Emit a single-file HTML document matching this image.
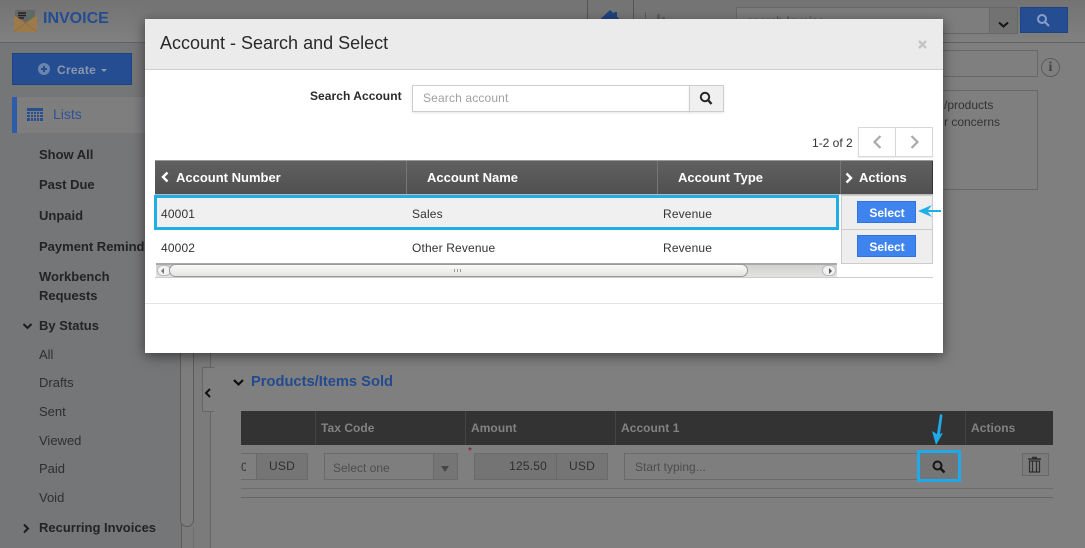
<!DOCTYPE html>
<html><head><meta charset="utf-8">
<style>
html,body{margin:0;padding:0;width:1085px;height:548px;overflow:hidden;background:#7f7f7f;font-family:"Liberation Sans",sans-serif;}
.a{position:absolute;white-space:nowrap;}
.box{position:absolute;box-sizing:border-box;}
.nb{font-size:13px;font-weight:bold;color:#232326;}
.nl{font-size:13px;color:#2f2f31;}
.th{font-size:13px;font-weight:bold;color:#fff;}
.td{font-size:12px;color:#333;letter-spacing:.15px;}
.dh{font-size:12px;font-weight:bold;color:#828282;letter-spacing:.05px;}
.sel{position:absolute;box-sizing:border-box;left:857px;width:59px;height:22px;background:#3f84ee;border:1px solid #2f73dd;color:#fff;font-size:12px;font-weight:bold;text-align:center;line-height:22px;padding-left:1px;}
</style></head><body>
<div id="bg" style="position:absolute;left:0;top:0;width:1085px;height:548px;overflow:hidden;">
<!-- sidebar -->
<div class="box" style="left:0;top:43px;width:181px;height:505px;background:#757678;"></div>
<div class="box" style="left:0;top:0;width:1085px;height:43px;background:linear-gradient(#737373,#808080);border-bottom:1px solid #626262;"></div>
<div class="box" style="left:181px;top:43px;width:30px;height:505px;background:#7b7b7b;border-left:1px solid #5f5b58;"></div>
<div class="box" style="left:210px;top:43px;width:1px;height:505px;background:#666;"></div>
<!-- logo -->
<svg class="a" style="left:13px;top:9px" width="26" height="24" viewBox="0 0 26 24"><rect x="2" y="1" width="20" height="14" fill="#666"/><path d="M5 4h8M5 6.500h8M5 9h6" stroke="#222" stroke-width="1.500"/><text x="15" y="10" font-size="8" fill="#3f7d6b" font-family="Liberation Sans">$</text><path d="M1 7l3 1 8.500 6L21 8l3-1v16H1z" fill="#9c7a4a"/><path d="M1 23l11.500-9L24 23" fill="none" stroke="#8f6f42" stroke-width="1"/></svg>
<div class="a" style="left:43px;top:10px;font-size:16px;font-weight:bold;color:#234c93;">INVOICE</div>
<div class="box" style="left:12px;top:53px;width:120px;height:32px;background:#254e92;border:1px solid #1f4484;"></div>
<div class="box" style="left:38px;top:63px;width:12px;height:12px;border-radius:50%;background:#6b84ad;"></div>
<div class="box" style="left:41px;top:68px;width:6px;height:2px;background:#254e92;"></div>
<div class="box" style="left:43px;top:66px;width:2px;height:6px;background:#254e92;"></div>
<div class="a" style="left:57px;top:63px;font-size:12px;font-weight:bold;color:#8c97ab;letter-spacing:.3px;">Create</div>
<div class="box" style="left:101px;top:69px;border:3px solid transparent;border-top:3px solid #8c97ab;"></div>
<div class="box" style="left:12px;top:97px;width:133px;height:36px;background:#7e7e7f;border-left:5px solid #2f5ca8;"></div>
<svg class="a" style="left:27px;top:108px" width="16" height="13"><rect width="16" height="13" fill="#284f92"/><path d="M0 3.500h16M0 6.500h16M0 9.500h16M3.500 3v10M6.500 3v10M9.500 3v10M12.500 3v10" stroke="#7e7e7f" stroke-width="1"/></svg>
<div class="a" style="left:53px;top:106px;font-size:14px;color:#2f5296;">Lists</div>
<div class="a nb" style="left:39px;top:147px;">Show All</div>
<div class="a nb" style="left:39px;top:177px;">Past Due</div>
<div class="a nb" style="left:39px;top:208px;">Unpaid</div>
<div class="a nb" style="left:39px;top:239px;">Payment Reminders</div>
<div class="a nb" style="left:39px;top:269px;">Workbench</div>
<div class="a nb" style="left:39px;top:288px;">Requests</div>
<div class="a nb" style="left:39px;top:318px;">By Status</div>
<svg class="a" style="left:22px;top:322px" width="11" height="9"><path d="M1.500 2l4 4 4-4" fill="none" stroke="#1d1d1f" stroke-width="2"/></svg>
<div class="a nl" style="left:39px;top:347px;">All</div>
<div class="a nl" style="left:39px;top:375px;">Drafts</div>
<div class="a nl" style="left:39px;top:404px;">Sent</div>
<div class="a nl" style="left:39px;top:433px;">Viewed</div>
<div class="a nl" style="left:39px;top:461px;">Paid</div>
<div class="a nl" style="left:39px;top:490px;">Void</div>
<div class="a nb" style="left:39px;top:520px;">Recurring Invoices</div>
<svg class="a" style="left:22px;top:523px" width="9" height="11"><path d="M2 1.500l4 4-4 4" fill="none" stroke="#1d1d1f" stroke-width="2"/></svg>
<!-- side scroll -->
<div class="box" style="left:180px;top:340px;width:14px;height:187px;background:#7d7d7d;border:1px solid #5f5b58;border-top:0;border-radius:0 0 7px 7px;"></div>
<div class="box" style="left:193px;top:527px;width:1px;height:21px;background:#6e6e6e;"></div>
<div class="box" style="left:202px;top:367px;width:12px;height:45px;background:#7f7f7f;border:1px solid #666;border-right:0;"></div>
<svg class="a" style="left:204px;top:388px" width="8" height="10"><path d="M6 1L2 5l4 4" fill="none" stroke="#111" stroke-width="2"/></svg>
<!-- top right -->
<div class="box" style="left:587px;top:0;width:47px;height:20px;border-left:1px solid #555;border-right:1px solid #555;"></div>
<svg class="a" style="left:599px;top:8px" width="22" height="12"><path d="M1 11.500L11 2l4 3.500V4h3v4.500l3 3z" fill="#1f437f"/></svg>
<div class="box" style="left:645px;top:12px;width:1px;height:8px;background:#606060;"></div>
<div class="box" style="left:657px;top:14px;width:3px;height:6px;background:#606060;"></div>
<div class="box" style="left:662px;top:17px;width:3px;height:3px;background:#606060;"></div>
<div class="box" style="left:736px;top:7px;width:282px;height:27px;background:#7d7d7d;border:1px solid #686868;"></div>
<div class="a" style="left:747px;top:14px;font-size:12px;color:#454545;">search Invoice</div>
<div class="box" style="left:989px;top:7px;width:29px;height:27px;background:#727272;border:1px solid #686868;"></div>
<svg class="a" style="left:997px;top:21px" width="13" height="9"><path d="M2 1.500l4.500 4 4.500-4" fill="none" stroke="#151515" stroke-width="2"/></svg>
<div class="box" style="left:1020px;top:7px;width:48px;height:26px;background:#254e92;border:1px solid #1f4484;"></div>
<svg class="a" style="left:1036px;top:13px" width="15" height="15"><circle cx="6" cy="6" r="4" fill="none" stroke="#85a0c8" stroke-width="2"/><path d="M9 9l4 4" stroke="#85a0c8" stroke-width="2"/></svg>
<div class="box" style="left:900px;top:50px;width:138px;height:27px;border:1px solid #686868;"></div>
<div class="box" style="left:1041px;top:58px;width:19px;height:19px;border:1px solid #5c5c5c;border-radius:50%;color:#444;font:bold 14px/17px 'Liberation Serif',serif;text-align:center;">i</div>
<div class="box" style="left:900px;top:90px;width:138px;height:100px;border:1px solid #686868;"></div>
<div class="a" style="left:944px;top:98px;font-size:12px;color:#333;">/products</div>
<div class="a" style="left:944px;top:115px;font-size:12px;color:#333;">r concerns</div>
<!-- products -->
<svg class="a" style="left:232px;top:378px" width="13" height="10"><path d="M2 2l4.500 4.500L11 2" fill="none" stroke="#0e0e0e" stroke-width="2.200"/></svg>
<div class="a" style="left:251px;top:374px;font-size:14.7px;font-weight:bold;color:#234a8f;">Products/Items Sold</div>
<div class="box" style="left:241px;top:411px;width:812px;height:34px;background:#333;"></div>
<div class="box" style="left:315px;top:411px;width:1px;height:34px;background:#444;"></div>
<div class="box" style="left:465px;top:411px;width:1px;height:34px;background:#444;"></div>
<div class="box" style="left:615px;top:411px;width:1px;height:34px;background:#444;"></div>
<div class="box" style="left:965px;top:411px;width:1px;height:34px;background:#444;"></div>
<div class="a dh" style="left:321px;top:421px;">Tax Code</div>
<div class="a dh" style="left:471px;top:421px;">Amount</div>
<div class="a dh" style="left:621px;top:421px;">Account 1</div>
<div class="a dh" style="left:971px;top:421px;">Actions</div>
<div class="a" style="left:241px;top:460px;font-size:12px;color:#333;width:5px;overflow:hidden;">0</div>
<div class="box" style="left:241px;top:453px;width:16px;height:27px;border:1px solid #6a6a6a;border-left:0;border-right:0;"></div>
<div class="box" style="left:256px;top:453px;width:52px;height:27px;background:#757575;border:1px solid #6a6a6a;color:#2f2f2f;font-size:12px;text-align:center;line-height:25px;letter-spacing:.2px;">USD</div>
<div class="box" style="left:324px;top:453px;width:134px;height:27px;background:#7e7e7e;border:1px solid #6a6a6a;"></div>
<div class="box" style="left:433px;top:453px;width:25px;height:27px;background:#757575;border:1px solid #6a6a6a;"></div>
<div class="box" style="left:441px;top:466px;border:4px solid transparent;border-top:6px solid #474747;border-bottom:0;"></div>
<div class="a" style="left:333px;top:461px;font-size:12px;color:#4d4d4d;">Select one</div>
<div class="a" style="left:468px;top:446px;font-size:10px;color:#8a1414;">*</div>
<div class="box" style="left:474px;top:453px;width:83px;height:27px;background:#747474;border:1px solid #6a6a6a;color:#2f2f2f;font-size:12px;text-align:right;padding-right:9px;line-height:25px;letter-spacing:.2px;">125.50</div>
<div class="box" style="left:556px;top:453px;width:52px;height:27px;background:#757575;border:1px solid #6a6a6a;color:#2f2f2f;font-size:12px;text-align:center;line-height:25px;letter-spacing:.2px;">USD</div>
<div class="box" style="left:624px;top:453px;width:295px;height:27px;border:1px solid #6a6a6a;background:#7e7e7e;"></div>
<div class="a" style="left:635px;top:460px;font-size:12px;color:#4d4d4d;">Start typing...</div>
<div class="box" style="left:917px;top:450px;width:44px;height:32px;border:3px solid #1eaae8;background:#757575;"></div>
<svg class="a" style="left:932px;top:460px" width="14" height="14"><circle cx="5.500" cy="5.500" r="4" fill="none" stroke="#151515" stroke-width="2"/><path d="M8.500 8.500l4 4" stroke="#151515" stroke-width="2.400"/></svg>
<svg class="a" style="left:930px;top:414px" width="16" height="34"><path d="M10 0L12.500 1 10 20l3-1-7 12L2 17l5 3z" fill="#1eaae8"/></svg>
<div class="box" style="left:1022px;top:453px;width:27px;height:23px;border:1px solid #686868;background:#7b7b7b;"></div>
<svg class="a" style="left:1028px;top:456px" width="14" height="17"><path d="M0 3h13M4 1.500h5" stroke="#2f2f2f" stroke-width="1.500"/><path d="M1.500 5h10v11h-10zM4.500 5v11M8.500 5v11" fill="none" stroke="#2f2f2f" stroke-width="1.200"/></svg>
<div class="box" style="left:241px;top:488px;width:812px;height:1px;background:#6c6c6c;"></div>
<div class="box" style="left:241px;top:497px;width:812px;height:1px;background:#666;"></div>
</div>
<!-- modal -->
<div class="box" style="left:145px;top:19px;width:798px;height:334px;background:#fff;box-shadow:0 3px 12px rgba(0,0,0,.5);">
<div class="box" style="left:0;top:0;width:798px;height:51px;background:#ebebeb;border-bottom:1px solid #cfcfcf;"></div>
<div class="a" style="left:15px;top:14px;font-size:18px;color:#2a2a2a;">Account - Search and Select</div>
<svg class="a" style="left:773px;top:21px" width="9" height="9"><path d="M1 1l7 7M8 1L1 8" stroke="#c4c4c4" stroke-width="2.400"/></svg>
<div class="box" style="left:0;top:284px;width:798px;height:1px;background:#e3e3e3;"></div>
</div>
<div class="a" style="left:310px;top:89px;font-size:12px;font-weight:bold;color:#2a2a2a;letter-spacing:.05px;">Search Account</div>
<div class="box" style="left:412px;top:85px;width:278px;height:27px;background:#fff;border:1px solid #cdcdcd;box-shadow:0 1px 2px rgba(0,0,0,.1);"></div>
<div class="a" style="left:423px;top:91px;font-size:12px;color:#a0a0a0;letter-spacing:.15px;">Search account</div>
<div class="box" style="left:689px;top:85px;width:35px;height:27px;background:#f0f0f0;border:1px solid #cdcdcd;box-shadow:0 1px 2px rgba(0,0,0,.1);"></div>
<svg class="a" style="left:699px;top:91px" width="14" height="15"><circle cx="6" cy="6" r="4.200" fill="none" stroke="#23262b" stroke-width="2"/><path d="M9 9l3.500 4" stroke="#23262b" stroke-width="2.400"/></svg>
<div class="a" style="left:812px;top:136px;font-size:12px;color:#333;">1-2 of 2</div>
<div class="box" style="left:858px;top:127px;width:75px;height:30px;background:#fff;border:1px solid #d8d8d8;box-shadow:0 1px 1px rgba(0,0,0,.08);"></div>
<div class="box" style="left:895px;top:127px;width:1px;height:30px;background:#d8d8d8;"></div>
<svg class="a" style="left:871px;top:134px" width="12" height="16"><path d="M9.500 2L3.500 8l6 6" fill="none" stroke="#aaa" stroke-width="2.200"/></svg>
<svg class="a" style="left:909px;top:134px" width="12" height="16"><path d="M2.500 2l6 6-6 6" fill="none" stroke="#aaa" stroke-width="2.200"/></svg>
<!-- table -->
<div class="box" style="left:155px;top:160px;width:778px;height:35px;background:linear-gradient(#606060,#505050);border-top:1px solid #999;border-bottom:1px solid #bbb;"></div>
<div class="box" style="left:406px;top:161px;width:1px;height:33px;background:#777;"></div>
<div class="box" style="left:657px;top:161px;width:1px;height:33px;background:#777;"></div>
<div class="box" style="left:840px;top:161px;width:1px;height:33px;background:#777;"></div>
<div class="box" style="left:932px;top:161px;width:1px;height:33px;background:#333;"></div>
<svg class="a" style="left:160px;top:171px" width="10" height="12"><path d="M7.500 1.500L3 6l4.500 4.500" fill="none" stroke="#fff" stroke-width="2.400"/></svg>
<div class="a th" style="left:176px;top:170px;">Account Number</div>
<div class="a th" style="left:427px;top:170px;">Account Name</div>
<div class="a th" style="left:678px;top:170px;">Account Type</div>
<svg class="a" style="left:844px;top:172px" width="10" height="12"><path d="M2.500 1.500L7 6l-4.500 4.500" fill="none" stroke="#fff" stroke-width="2.400"/></svg>
<div class="a th" style="left:859px;top:170px;">Actions</div>
<div class="box" style="left:154px;top:195px;width:685px;height:35px;background:#f0f0f0;border:3px solid #1eaee8;"></div>
<div class="a td" style="left:161px;top:207px;">40001</div>
<div class="a td" style="left:412px;top:207px;">Sales</div>
<div class="a td" style="left:663px;top:207px;">Revenue</div>
<div class="a td" style="left:161px;top:241px;">40002</div>
<div class="a td" style="left:412px;top:241px;">Other Revenue</div>
<div class="a td" style="left:663px;top:241px;">Revenue</div>
<div class="box" style="left:841px;top:195px;width:92px;height:35px;background:#eee;border:1px solid #ccc;"></div>
<div class="box" style="left:841px;top:230px;width:92px;height:34px;background:#eee;border:1px solid #ccc;border-top:0;"></div>
<div class="sel" style="top:201px;">Select</div>
<div class="sel" style="top:235px;">Select</div>
<svg class="a" style="left:917px;top:204px" width="26" height="14"><path d="M1 7L15 1l-4 5h13v2H11l4 5z" fill="#1eaee8"/></svg>
<!-- hscroll -->
<div class="box" style="left:156px;top:263px;width:681px;height:14px;background:linear-gradient(#d2d2d0,#e2e2e0);border-top:2px solid #aaa;"></div>
<div class="box" style="left:157px;top:265px;width:14px;height:11px;background:#f2f2f2;border:1px solid #bbb;border-radius:6px;"></div>
<div class="box" style="left:822px;top:265px;width:14px;height:11px;background:#f2f2f2;border:1px solid #bbb;border-radius:6px;"></div>
<div class="box" style="left:161px;top:268px;border:3px solid transparent;border-right:3px solid #777;border-left:0;"></div>
<div class="box" style="left:829px;top:268px;border:3px solid transparent;border-left:3px solid #555;border-right:0;"></div>
<div class="box" style="left:169px;top:264px;width:579px;height:13px;background:linear-gradient(#fafafa,#e4e4e2);border:1px solid #999;border-radius:7px;"></div>
<div class="box" style="left:454px;top:269px;width:7px;height:3px;background:repeating-linear-gradient(90deg,#999 0 1px,transparent 1px 3px);"></div>
<div class="box" style="left:155px;top:277px;width:778px;height:1px;background:#ccc;"></div>
</body></html>
